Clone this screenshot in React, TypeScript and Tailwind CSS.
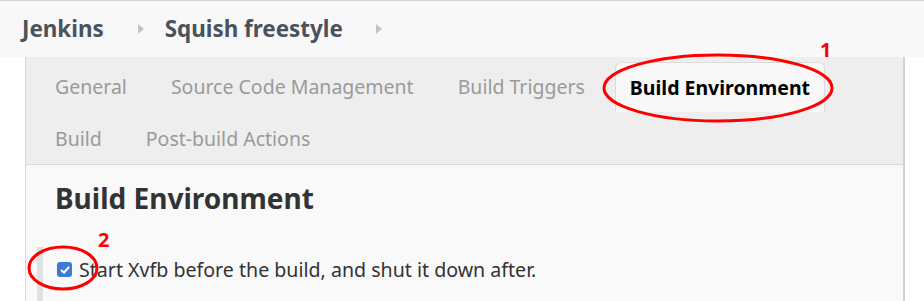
import React from "react";

function Arrow() {
  return (
    <svg width="6" height="10" viewBox="0 0 6 10" className="block">
      <path d="M0 0 L6 5 L0 10 Z" fill="#c4c4c4" />
    </svg>
  );
}

function Tab({ label, active = false }: { label: string; active?: boolean }) {
  return (
    <div
      className={
        active
          ? "h-[50px] px-[14px] flex items-center bg-[#f8f8f8] border border-b-0 border-[#dcdcdc] rounded-t-[6px] text-black font-bold"
          : "h-[50px] px-[14px] flex items-center text-[#9a9a9a]"
      }
    >
      {label}
    </div>
  );
}

export default function App() {
  return (
    <div className="relative w-[924px] h-[301px] overflow-hidden bg-white font-['Noto_Sans',sans-serif]">
      <div className="h-[57px] border-t border-[#d6d2ce] bg-[#f8f8f8] flex items-center pl-[22px] pb-[1px] text-[22.4px] font-bold text-[#4a525c]">
        <span>Jenkins</span>
        <span className="ml-[34px] mr-[21px]"><Arrow /></span>
        <span>Squish freestyle</span>
        <span className="ml-[33px]"><Arrow /></span>
      </div>
      <div className="ml-[25px] w-[880px] h-[244px] border-l border-[#d6d6d6] border-r-2 border-r-[#d2d2d2] flex flex-col">
        <div className="bg-[#eeeeee] border-b border-[#d8d8d8] pl-[15px] pt-[5px] flex flex-col gap-[2px] text-[19.5px]">
          <div className="flex gap-[16px]">
            <Tab label="General" />
            <Tab label="Source Code Management" />
            <Tab label="Build Triggers" />
            <Tab label="Build Environment" active />
          </div>
          <div className="flex gap-[16px]">
            <Tab label="Build" />
            <Tab label="Post-build Actions" />
          </div>
        </div>
        <div className="flex-1 bg-[#f9f9f9]">
          <div className="pl-[29px] pt-[15px] text-[28px] font-bold text-[#333333] leading-[36px]">
            Build Environment
          </div>
          <div className="ml-[11px] mt-[31px] border-l-[6px] border-[#e0e0e0] pl-[14px] pt-[8px] pb-[20px] flex items-center text-[19.6px] text-[#333333]">
            <span className="w-[15px] h-[15px] rounded-[3px] bg-[#3b7ad6] flex items-center justify-center mr-[7px] shrink-0">
              <svg width="10" height="8" viewBox="0 0 10 8">
                <path d="M1 4 L4 6.5 L9 1" stroke="white" strokeWidth="2" fill="none" />
              </svg>
            </span>
            <span>Start Xvfb before the build, and shut it down after.</span>
          </div>
        </div>
      </div>
      {/* annotations */}
      <svg className="absolute left-0 top-0 pointer-events-none" width="924" height="301">
        <ellipse cx="718" cy="88" rx="114" ry="33" fill="none" stroke="#ff0000" strokeWidth="3" />
        <ellipse cx="63" cy="268" rx="34" ry="21" fill="none" stroke="#ff0000" strokeWidth="3" />
      </svg>
      <div className="absolute left-[820px] top-[40px] text-[20px] font-bold text-[#ff0000] leading-none">1</div>
      <div className="absolute left-[98px] top-[230px] text-[20px] font-bold text-[#ff0000] leading-none">2</div>
    </div>
  );
}
